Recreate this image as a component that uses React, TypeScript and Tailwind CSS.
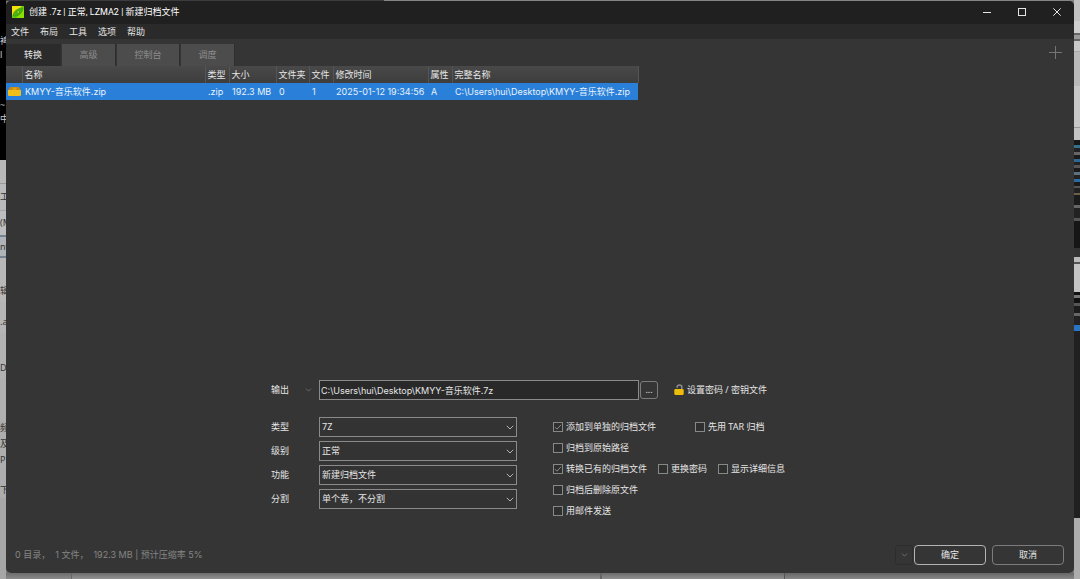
import { useState } from "react";

const menus = ["文件", "布局", "工具", "选项", "帮助"];

const tabs = [
  { label: "转换", width: "w-[55px]" },
  { label: "高级", width: "w-[54px]" },
  { label: "控制台", width: "w-[63px]" },
  { label: "调度", width: "w-[54px]" },
];

const columns = [
  { label: "", width: "w-[16px]" },
  { label: "名称", width: "w-[183px]" },
  { label: "类型", width: "w-[24px]" },
  { label: "大小", width: "w-[47px]" },
  { label: "文件夹", width: "w-[33px]" },
  { label: "文件", width: "w-[24px]" },
  { label: "修改时间", width: "w-[95px]" },
  { label: "属性", width: "w-[24px]" },
  { label: "完整名称", width: "w-[186px]" },
];

const files = [
  [
    "KMYY-音乐软件.zip",
    ".zip",
    "192.3 MB",
    "0",
    "1",
    "2025-01-12 19:34:56",
    "A",
    "C:\\Users\\hui\\Desktop\\KMYY-音乐软件.zip",
  ],
];

const selects = [
  { id: "type", label: "类型", options: ["7Z", "ZIP", "TAR"] },
  { id: "level", label: "级别", options: ["正常", "最快", "最好"] },
  { id: "action", label: "功能", options: ["新建归档文件", "更新"] },
  { id: "split", label: "分割", options: ["单个卷，不分割", "10 MB"] },
];

// strips of the windows lying behind this one
const leftStrip = [
  { cls: "h-[34px] bg-black", text: "" },
  { cls: "h-[14px] bg-black text-[#ccc]", text: "裨" },
  { cls: "h-[14px] bg-black text-[#ccc]", text: "l" },
  { cls: "h-[36px] bg-black", text: "" },
  { cls: "h-[14px] bg-black text-[#aaa]", text: "~" },
  { cls: "h-[14px] bg-black text-[#ccc]", text: "中" },
  { cls: "h-[34px] bg-black", text: "" },
  { cls: "h-[23px] bg-[#b8b8b8]", text: "" },
  { cls: "h-[27px] border-t border-[#999] bg-[#b8bbbe]", text: "工" },
  { cls: "h-[25px] border-t border-[#a5a5a5] bg-[#bbbdbf]", text: "(M" },
  { cls: "h-[23px] border-y-2 border-[#75828f] bg-[#aeb4ba]", text: "n%" },
  { cls: "h-[22px] bg-[#b8b8b8]", text: "" },
  { cls: "h-[22px] bg-[#b8b8b8]", text: "辑" },
  { cls: "h-[9px] bg-[#b5b5b5]", text: "" },
  { cls: "h-[22px] bg-[#b5b5b5]", text: ".a" },
  { cls: "h-[24px] bg-[#b2b2b2]", text: "" },
  { cls: "h-[22px] bg-[#b2b2b2]", text: "D" },
  { cls: "h-[41px] bg-[#b0b0b0]", text: "" },
  { cls: "h-[16px] bg-[#aeaeae]", text: "频" },
  { cls: "h-[16px] bg-[#aeaeae]", text: "及" },
  { cls: "h-[16px] bg-[#aeaeae]", text: "P" },
  { cls: "h-[14px] bg-[#adadad]", text: "" },
  { cls: "h-[16px] bg-[#adadad]", text: "下" },
  { cls: "flex-1 bg-[#a6a6a6]", text: "" },
];

const rightStrip = [
  "h-[21px] bg-[#c2c2c2]",
  "h-[12px] bg-[#cfcfcf]",
  "h-[8px] border-y-2 border-[#666] bg-[#9a9a9a]",
  "h-[10px] bg-[#c8c8c8]",
  "h-[35px] border-t border-[#aaa] bg-[#bababa]",
  "h-[41px] bg-[#c8c8c8]",
  "h-[13px] border-t border-[#999] bg-[#c4c4c4]",
  "h-[5px] bg-[#171717]",
  "h-[3px] bg-[#35708f]",
  "h-[4px] bg-[#222]",
  "h-[3px] bg-[#666]",
  "h-[4px] bg-[#1b1b1b]",
  "h-[3px] bg-[#2f6790]",
  "h-[3px] bg-[#222]",
  "h-[3px] bg-[#555]",
  "h-[4px] bg-[#1b1b1b]",
  "h-[3px] bg-[#5c7180]",
  "h-[4px] bg-[#222]",
  "h-[3px] bg-[#2a6ba4]",
  "h-[4px] bg-[#1b1b1b]",
  "h-[2px] bg-[#555]",
  "h-[5px] bg-[#222]",
  "h-[2px] bg-[#6b6046]",
  "h-[10px] bg-[#1b1b1b]",
  "h-[3px] bg-[#666]",
  "h-[10px] bg-[#222]",
  "h-[3px] bg-[#555]",
  "h-[27px] bg-[#161616]",
  "h-[9px] bg-[#333]",
  "h-[5px] bg-[#bbb]",
  "h-[30px] border-t-2 border-[#555] bg-[#c4c4c4]",
  "h-[3px] bg-[#111]",
  "h-[3px] bg-[#777]",
  "h-[5px] bg-[#111]",
  "h-[3px] bg-[#555]",
  "h-[7px] bg-[#1c1c1c]",
  "h-[3px] bg-[#666]",
  "h-[9px] bg-[#222]",
  "h-[6px] bg-[#2a74c4]",
  "h-[187px] bg-[#202020]",
  "flex-1 bg-[#adadad]",
];

const Chevron = ({ className }: { className?: string }) => (
  <svg viewBox="0 0 8 5" fill="none" stroke="currentColor" className={className}>
    <path d="M0.8 0.8 L4 4 L7.2 0.8" />
  </svg>
);

const AppIcon = () => (
  <svg viewBox="0 0 12 12" className="h-3 w-3">
    <path d="M0 0H12V12H0Z" fill="#5fcc14" />
    <path d="M0 0H10L0 10Z" fill="#f2e10c" />
    <path d="M12 3V12H4Z" fill="#8be000" />
    <path
      d="M1 9.5C1.5 5.5 5 2.3 10.5 2.2C10.6 6 8 9.8 2.6 10.2Z"
      fill="#4db510"
      stroke="#2c8a0a"
      strokeWidth="0.5"
    />
    <circle cx="6.2" cy="6" r="1.4" fill="#a6e52b" stroke="#2c8a0a" strokeWidth="0.6" />
  </svg>
);

const ZipIcon = () => (
  <svg viewBox="0 0 13 9" className="h-[9px] w-[13px]">
    <path d="M2 0H11L13 3.5H0Z" fill="#c98712" />
    <path d="M0 3H13V8Q13 9 12 9H1Q0 9 0 8Z" fill="#f0be1a" />
    <path d="M4.5 0.5H8.5V3H4.5Z" fill="#dd9f18" />
  </svg>
);

const LockIcon = () => (
  <svg viewBox="0 0 10 12" className="h-3 w-[10px]">
    <path
      d="M3.2 3.8V3Q3.2 1 5.5 1Q7.8 1 7.8 3V5.5"
      fill="none"
      stroke="#8d8d8d"
      strokeWidth="1.5"
    />
    <rect x="0.3" y="5" width="9.4" height="6" rx="1.2" fill="#eebc0a" />
  </svg>
);

const CheckBox = ({
  id,
  label,
  checked = false,
}: {
  id: string;
  label: string;
  checked?: boolean;
}) => {
  const [on, setOn] = useState(checked);

  return (
    <label htmlFor={id} className="flex items-center gap-[3px] whitespace-nowrap">
      <span className="grid h-[10px] w-[10px]">
        <input
          id={id}
          type="checkbox"
          checked={on}
          onChange={() => setOn(!on)}
          className="col-start-1 row-start-1 h-[10px] w-[10px] appearance-none border border-[#858a85] bg-[#2f2f2f]"
        />
        {on && (
          <svg
            viewBox="0 0 10 10"
            fill="none"
            stroke="#8c8c8c"
            className="pointer-events-none col-start-1 row-start-1 h-[10px] w-[10px]"
          >
            <path d="M2 5.2 L4 7.2 L8 2.8" />
          </svg>
        )}
      </span>
      {label}
    </label>
  );
};

const TitleBar = () => (
  <header className="flex h-[23px] items-center bg-[#202020] pb-[2px] pl-[6px]">
    <AppIcon />
    <h1 className="ml-[5px] flex-1 font-['Roboto','Noto_Sans_CJK_SC',sans-serif] text-white">
      创建 .7z | 正常, LZMA2 | 新建归档文件
    </h1>
    <button aria-label="最小化" className="grid h-full w-[35px] place-items-center">
      <svg viewBox="0 0 8 8" className="h-2 w-2" stroke="#e4e4e4">
        <path d="M0 4.5H8" />
      </svg>
    </button>
    <button aria-label="最大化" className="grid h-full w-[35px] place-items-center">
      <svg viewBox="0 0 8 8" className="h-2 w-2" fill="none" stroke="#e4e4e4">
        <rect x="0.5" y="0.5" width="7" height="7" />
      </svg>
    </button>
    <button aria-label="关闭" className="grid h-full w-[35px] place-items-center">
      <svg viewBox="0 0 8 8" className="h-2 w-2" stroke="#e4e4e4">
        <path d="M0.3 0.3L7.7 7.7M7.7 0.3L0.3 7.7" />
      </svg>
    </button>
  </header>
);

const FileTable = () => (
  <table className="w-[632px] table-fixed border-collapse text-left whitespace-nowrap">
    <thead>
      <tr className="h-[17px] bg-linear-to-b from-[#494949] to-[#3d3d3d]">
        {columns.map((column, i) => (
          <th
            key={i}
            className={`${column.width} border-r border-[#555] p-0 pl-[2px] font-normal`}
          >
            {column.label}
          </th>
        ))}
      </tr>
    </thead>
    <tbody className="font-['Inter','Noto_Sans_CJK_SC',sans-serif]">
      {files.map((file) => (
        <tr key={file[0]} className="h-[17px] bg-[#2a80d9] text-[#e8f2fc]">
          <td className="p-0 pl-[2px]">
            <ZipIcon />
          </td>
          {file.map((cell, i) => (
            <td key={i} className="p-0 pl-[3px]">
              {cell}
            </td>
          ))}
        </tr>
      ))}
    </tbody>
  </table>
);

const OutputForm = () => {
  const [output, setOutput] = useState(
    "C:\\Users\\hui\\Desktop\\KMYY-音乐软件.7z"
  );

  return (
    <form className="mx-auto w-full max-w-[538px]">
      <div className="flex h-5 items-center">
        <label htmlFor="output" className="w-[34px]">
          输出
        </label>
        <button type="button" aria-label="输出选项" className="w-[14px] text-[#777]">
          <Chevron className="h-[4px] w-[7px]" />
        </button>
        <input
          id="output"
          type="text"
          value={output}
          onChange={(e) => setOutput(e.target.value)}
          className="h-5 w-[320px] border border-[#8a8a8a] bg-[#292929] px-px font-['Inter','Noto_Sans_CJK_SC',sans-serif]"
        />
        <button
          type="button"
          className="ml-px h-[18px] w-[18px] rounded-[3px] border border-[#7c7c7c]"
        >
          ...
        </button>
        <button type="button" className="ml-4 flex items-center gap-[3px] whitespace-nowrap">
          <LockIcon />
          设置密码 / 密钥文件
        </button>
      </div>

      <div className="mt-[17px] flex items-start">
        <div className="flex w-[246px] flex-col gap-1">
          {selects.map((select) => (
            <div key={select.id} className="flex items-center">
              <label htmlFor={select.id} className="w-12">
                {select.label}
              </label>
              <div className="relative flex-1">
                <select
                  id={select.id}
                  className="block h-5 w-full appearance-none border border-[#8a8a8a] bg-[#333] px-[2px]"
                >
                  {select.options.map((option) => (
                    <option key={option}>{option}</option>
                  ))}
                </select>
                <Chevron className="pointer-events-none absolute top-2 right-[3px] h-[5px] w-2 text-[#b5b5b5]" />
              </div>
            </div>
          ))}
        </div>

        <div className="ml-9 flex flex-col gap-px *:h-5">
          <div className="flex items-center">
            <div className="w-[142px]">
              <CheckBox id="separate" label="添加到单独的归档文件" checked />
            </div>
            <CheckBox id="tar" label="先用 TAR 归档" />
          </div>
          <CheckBox id="origin" label="归档到原始路径" />
          <div className="flex items-center gap-[11px]">
            <CheckBox id="convert" label="转换已有的归档文件" checked />
            <CheckBox id="password" label="更换密码" />
            <CheckBox id="details" label="显示详细信息" />
          </div>
          <CheckBox id="delete" label="归档后删除原文件" />
          <CheckBox id="mail" label="用邮件发送" />
        </div>
      </div>
    </form>
  );
};

const App = () => {
  const [tab, setTab] = useState("转换");

  return (
    <div className="flex h-screen bg-[#777] font-['Noto_Sans','Noto_Sans_CJK_SC',sans-serif] text-[9px] leading-[14px] text-[#e6e6e6]">
      <div aria-hidden="true" className="flex w-[6px] flex-col overflow-hidden text-[#333]">
        {leftStrip.map((part, i) => (
          <div
            key={i}
            className={`flex shrink-0 items-center overflow-hidden whitespace-nowrap ${part.cls}`}
          >
            {part.text}
          </div>
        ))}
      </div>

      <div className="flex min-w-0 flex-1 flex-col">
        <div className="flex h-px">
          <div className="w-[378px] bg-[#3c3c3f]" />
          <div className="flex-1 bg-[#858585]" />
        </div>
        <div className="flex flex-1 flex-col overflow-hidden rounded-[5px] bg-[#353535]">
          <TitleBar />
          <nav className="flex h-[15px] items-center gap-[11px] bg-[#2a2a2a] pl-[5px]">
            {menus.map((menu) => (
              <button key={menu}>{menu}</button>
            ))}
          </nav>

          <div className="flex items-start justify-between pt-[5px] pr-3">
            <div role="tablist" className="flex gap-px">
              {tabs.map(({ label, width }) => (
                <button
                  key={label}
                  role="tab"
                  aria-selected={tab === label}
                  onClick={() => setTab(label)}
                  className={`h-[22px] border-r border-[#2e2e2e] ${width} ${
                    tab === label ? "bg-[#2b2b2b]" : "bg-[#4c4c4c] text-[#8c8c8c]"
                  }`}
                >
                  {label}
                </button>
              ))}
            </div>
            <button aria-label="添加" className="mt-[2px]">
              <svg viewBox="0 0 13 13" className="h-[13px] w-[13px]" stroke="#757575">
                <path d="M6.5 0V13M0 6.5H13" />
              </svg>
            </button>
          </div>

          <main className="flex flex-1 flex-col justify-between">
            <FileTable />
            <OutputForm />
          </main>

          <footer className="mt-6 mb-2 flex items-center pr-[10px] pl-[9px]">
            <p className="flex flex-1 gap-[5px] font-['Inter','Noto_Sans_CJK_SC',sans-serif] text-[#858585]">
              <span>0 目录，</span>
              <span>1 文件，</span>
              <span>192.3 MB | 预计压缩率 5%</span>
            </p>
            <button
              aria-label="更多"
              className="grid h-5 w-[18px] place-items-center rounded-[3px] border border-[#2d2d2d] text-[#777]"
            >
              <Chevron className="h-[4px] w-[7px]" />
            </button>
            <button className="ml-px h-5 w-[72px] rounded-[4px] border border-[#b4b4b4]">
              确定
            </button>
            <button className="ml-[6px] h-5 w-[72px] rounded-[4px] border border-[#7c7c7c]">
              取消
            </button>
          </footer>
        </div>
        <div className="flex h-[6px]">
          <div className="w-[66px] border-r border-[#666] bg-linear-to-b from-[#6c6c6c] to-[#8a8a8a]" />
          <div className="w-[530px] border-r-2 border-[#666] bg-linear-to-b from-[#6c6c6c] to-[#949494]" />
          <div className="w-[183px] border-r border-[#555] bg-linear-to-b from-[#6c6c6c] to-[#909090]" />
          <div className="flex-1 bg-linear-to-b from-[#666] to-[#888]" />
        </div>
      </div>

      <div aria-hidden="true" className="flex w-[6px] flex-col">
        {rightStrip.map((cls, i) => (
          <div key={i} className={`shrink-0 ${cls}`} />
        ))}
      </div>
    </div>
  );
};

export default App;
